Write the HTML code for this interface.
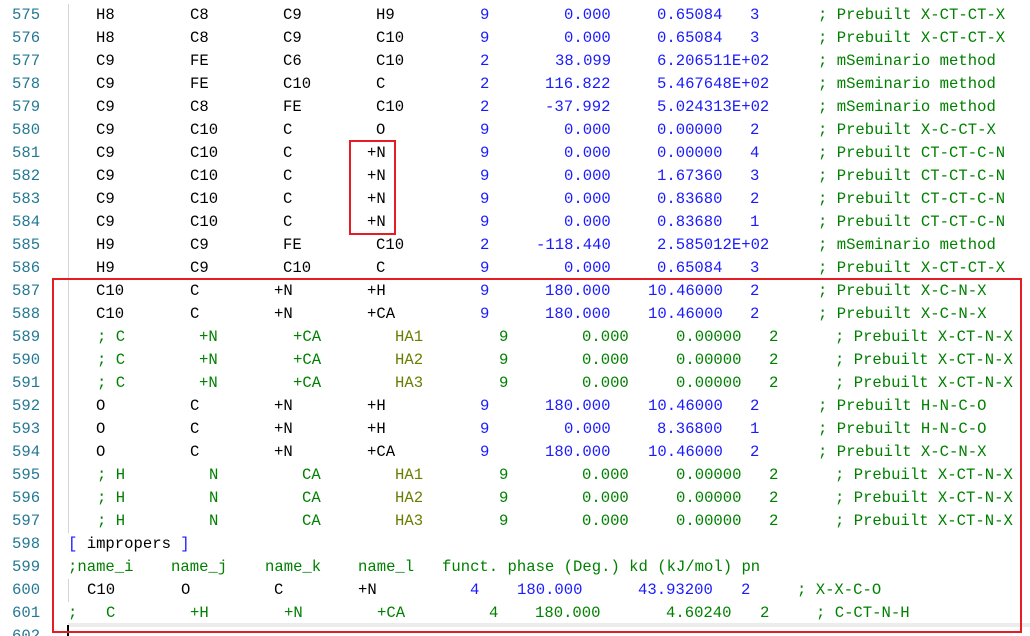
<!DOCTYPE html>
<html><head><meta charset="utf-8"><style>
html,body{margin:0;padding:0;background:#fff;width:1030px;height:636px;overflow:hidden;position:relative}
body{font-family:"Liberation Mono",monospace;font-size:15.6px}
.r{position:absolute;left:0;width:1030px;height:23px;line-height:23px}
.r span{position:absolute;white-space:pre;top:0}
.n{color:#237893;left:12px}
.k{color:#000}
.b{color:#1a1aff}
.g{color:#008000}
.o{color:#6b7d00}
.guide{position:absolute;left:68px;width:1px;background:#d4d4d4}
.box{position:absolute;border:2px solid #e51c23;box-sizing:border-box}
</style></head><body>
<div class="guide" style="top:4px;height:529px"></div>
<div class="guide" style="top:579px;height:23px"></div>
<div style="position:absolute;left:68px;top:623px;width:962px;height:4px;background:#ececec"></div>
<div style="position:absolute;left:67px;top:625px;width:2px;height:11px;background:#000"></div>

<div class="r" style="top:4px"><span class="n">575</span><span class="k" style="left:96px">H8</span><span class="k" style="left:190px">C8</span><span class="k" style="left:283px">C9</span><span class="k" style="left:376px">H9</span><span class="b" style="left:480px">9</span><span class="b" style="left:564px">0.000</span><span class="b" style="left:657px">0.65084</span><span class="b" style="left:750px">3</span><span class="g" style="left:818px">; Prebuilt X-CT-CT-X</span></div>
<div class="r" style="top:27px"><span class="n">576</span><span class="k" style="left:96px">H8</span><span class="k" style="left:190px">C8</span><span class="k" style="left:283px">C9</span><span class="k" style="left:376px">C10</span><span class="b" style="left:480px">9</span><span class="b" style="left:564px">0.000</span><span class="b" style="left:657px">0.65084</span><span class="b" style="left:750px">3</span><span class="g" style="left:818px">; Prebuilt X-CT-CT-X</span></div>
<div class="r" style="top:50px"><span class="n">577</span><span class="k" style="left:96px">C9</span><span class="k" style="left:190px">FE</span><span class="k" style="left:283px">C6</span><span class="k" style="left:376px">C10</span><span class="b" style="left:480px">2</span><span class="b" style="left:555px">38.099</span><span class="b" style="left:657px">6.206511E+02</span><span class="g" style="left:818px">; mSeminario method</span></div>
<div class="r" style="top:73px"><span class="n">578</span><span class="k" style="left:96px">C9</span><span class="k" style="left:190px">FE</span><span class="k" style="left:283px">C10</span><span class="k" style="left:376px">C</span><span class="b" style="left:480px">2</span><span class="b" style="left:545px">116.822</span><span class="b" style="left:657px">5.467648E+02</span><span class="g" style="left:818px">; mSeminario method</span></div>
<div class="r" style="top:96px"><span class="n">579</span><span class="k" style="left:96px">C9</span><span class="k" style="left:190px">C8</span><span class="k" style="left:283px">FE</span><span class="k" style="left:376px">C10</span><span class="b" style="left:480px">2</span><span class="b" style="left:545px">-37.992</span><span class="b" style="left:657px">5.024313E+02</span><span class="g" style="left:818px">; mSeminario method</span></div>
<div class="r" style="top:119px"><span class="n">580</span><span class="k" style="left:96px">C9</span><span class="k" style="left:190px">C10</span><span class="k" style="left:283px">C</span><span class="k" style="left:376px">O</span><span class="b" style="left:480px">9</span><span class="b" style="left:564px">0.000</span><span class="b" style="left:657px">0.00000</span><span class="b" style="left:750px">2</span><span class="g" style="left:818px">; Prebuilt X-C-CT-X</span></div>
<div class="r" style="top:142px"><span class="n">581</span><span class="k" style="left:96px">C9</span><span class="k" style="left:190px">C10</span><span class="k" style="left:283px">C</span><span class="k" style="left:367px">+N</span><span class="b" style="left:480px">9</span><span class="b" style="left:564px">0.000</span><span class="b" style="left:657px">0.00000</span><span class="b" style="left:750px">4</span><span class="g" style="left:818px">; Prebuilt CT-CT-C-N</span></div>
<div class="r" style="top:165px"><span class="n">582</span><span class="k" style="left:96px">C9</span><span class="k" style="left:190px">C10</span><span class="k" style="left:283px">C</span><span class="k" style="left:367px">+N</span><span class="b" style="left:480px">9</span><span class="b" style="left:564px">0.000</span><span class="b" style="left:657px">1.67360</span><span class="b" style="left:750px">3</span><span class="g" style="left:818px">; Prebuilt CT-CT-C-N</span></div>
<div class="r" style="top:188px"><span class="n">583</span><span class="k" style="left:96px">C9</span><span class="k" style="left:190px">C10</span><span class="k" style="left:283px">C</span><span class="k" style="left:367px">+N</span><span class="b" style="left:480px">9</span><span class="b" style="left:564px">0.000</span><span class="b" style="left:657px">0.83680</span><span class="b" style="left:750px">2</span><span class="g" style="left:818px">; Prebuilt CT-CT-C-N</span></div>
<div class="r" style="top:211px"><span class="n">584</span><span class="k" style="left:96px">C9</span><span class="k" style="left:190px">C10</span><span class="k" style="left:283px">C</span><span class="k" style="left:367px">+N</span><span class="b" style="left:480px">9</span><span class="b" style="left:564px">0.000</span><span class="b" style="left:657px">0.83680</span><span class="b" style="left:750px">1</span><span class="g" style="left:818px">; Prebuilt CT-CT-C-N</span></div>
<div class="r" style="top:234px"><span class="n">585</span><span class="k" style="left:96px">H9</span><span class="k" style="left:190px">C9</span><span class="k" style="left:283px">FE</span><span class="k" style="left:376px">C10</span><span class="b" style="left:480px">2</span><span class="b" style="left:536px">-118.440</span><span class="b" style="left:657px">2.585012E+02</span><span class="g" style="left:818px">; mSeminario method</span></div>
<div class="r" style="top:257px"><span class="n">586</span><span class="k" style="left:96px">H9</span><span class="k" style="left:190px">C9</span><span class="k" style="left:283px">C10</span><span class="k" style="left:376px">C</span><span class="b" style="left:480px">9</span><span class="b" style="left:564px">0.000</span><span class="b" style="left:657px">0.65084</span><span class="b" style="left:750px">3</span><span class="g" style="left:818px">; Prebuilt X-CT-CT-X</span></div>
<div class="r" style="top:280px"><span class="n">587</span><span class="k" style="left:96px">C10</span><span class="k" style="left:190px">C</span><span class="k" style="left:274px">+N</span><span class="k" style="left:367px">+H</span><span class="b" style="left:480px">9</span><span class="b" style="left:545px">180.000</span><span class="b" style="left:648px">10.46000</span><span class="b" style="left:750px">2</span><span class="g" style="left:818px">; Prebuilt X-C-N-X</span></div>
<div class="r" style="top:303px"><span class="n">588</span><span class="k" style="left:96px">C10</span><span class="k" style="left:190px">C</span><span class="k" style="left:274px">+N</span><span class="k" style="left:367px">+CA</span><span class="b" style="left:480px">9</span><span class="b" style="left:545px">180.000</span><span class="b" style="left:648px">10.46000</span><span class="b" style="left:750px">2</span><span class="g" style="left:818px">; Prebuilt X-C-N-X</span></div>
<div class="r" style="top:326px"><span class="n">589</span><span class="g" style="left:97px">; C</span><span class="g" style="left:199px">+N</span><span class="g" style="left:293px">+CA</span><span class="o" style="left:395px">HA1</span><span class="g" style="left:499px">9</span><span class="g" style="left:582px">0.000</span><span class="g" style="left:676px">0.00000</span><span class="g" style="left:769px">2</span><span class="g" style="left:835px">; Prebuilt X-CT-N-X</span></div>
<div class="r" style="top:349px"><span class="n">590</span><span class="g" style="left:97px">; C</span><span class="g" style="left:199px">+N</span><span class="g" style="left:293px">+CA</span><span class="o" style="left:395px">HA2</span><span class="g" style="left:499px">9</span><span class="g" style="left:582px">0.000</span><span class="g" style="left:676px">0.00000</span><span class="g" style="left:769px">2</span><span class="g" style="left:835px">; Prebuilt X-CT-N-X</span></div>
<div class="r" style="top:372px"><span class="n">591</span><span class="g" style="left:97px">; C</span><span class="g" style="left:199px">+N</span><span class="g" style="left:293px">+CA</span><span class="o" style="left:395px">HA3</span><span class="g" style="left:499px">9</span><span class="g" style="left:582px">0.000</span><span class="g" style="left:676px">0.00000</span><span class="g" style="left:769px">2</span><span class="g" style="left:835px">; Prebuilt X-CT-N-X</span></div>
<div class="r" style="top:395px"><span class="n">592</span><span class="k" style="left:96px">O</span><span class="k" style="left:190px">C</span><span class="k" style="left:274px">+N</span><span class="k" style="left:367px">+H</span><span class="b" style="left:480px">9</span><span class="b" style="left:545px">180.000</span><span class="b" style="left:648px">10.46000</span><span class="b" style="left:750px">2</span><span class="g" style="left:818px">; Prebuilt H-N-C-O</span></div>
<div class="r" style="top:418px"><span class="n">593</span><span class="k" style="left:96px">O</span><span class="k" style="left:190px">C</span><span class="k" style="left:274px">+N</span><span class="k" style="left:367px">+H</span><span class="b" style="left:480px">9</span><span class="b" style="left:564px">0.000</span><span class="b" style="left:657px">8.36800</span><span class="b" style="left:750px">1</span><span class="g" style="left:818px">; Prebuilt H-N-C-O</span></div>
<div class="r" style="top:441px"><span class="n">594</span><span class="k" style="left:96px">O</span><span class="k" style="left:190px">C</span><span class="k" style="left:274px">+N</span><span class="k" style="left:367px">+CA</span><span class="b" style="left:480px">9</span><span class="b" style="left:545px">180.000</span><span class="b" style="left:648px">10.46000</span><span class="b" style="left:750px">2</span><span class="g" style="left:818px">; Prebuilt X-C-N-X</span></div>
<div class="r" style="top:464px"><span class="n">595</span><span class="g" style="left:97px">; H</span><span class="g" style="left:209px">N</span><span class="g" style="left:302px">CA</span><span class="o" style="left:395px">HA1</span><span class="g" style="left:499px">9</span><span class="g" style="left:582px">0.000</span><span class="g" style="left:676px">0.00000</span><span class="g" style="left:769px">2</span><span class="g" style="left:835px">; Prebuilt X-CT-N-X</span></div>
<div class="r" style="top:487px"><span class="n">596</span><span class="g" style="left:97px">; H</span><span class="g" style="left:209px">N</span><span class="g" style="left:302px">CA</span><span class="o" style="left:395px">HA2</span><span class="g" style="left:499px">9</span><span class="g" style="left:582px">0.000</span><span class="g" style="left:676px">0.00000</span><span class="g" style="left:769px">2</span><span class="g" style="left:835px">; Prebuilt X-CT-N-X</span></div>
<div class="r" style="top:510px"><span class="n">597</span><span class="g" style="left:97px">; H</span><span class="g" style="left:209px">N</span><span class="g" style="left:302px">CA</span><span class="o" style="left:395px">HA3</span><span class="g" style="left:499px">9</span><span class="g" style="left:582px">0.000</span><span class="g" style="left:676px">0.00000</span><span class="g" style="left:769px">2</span><span class="g" style="left:835px">; Prebuilt X-CT-N-X</span></div>
<div class="r" style="top:533px"><span class="n">598</span><span style="left:68px"><span class="b" style="position:static">[</span><span class="k" style="position:static"> impropers </span><span class="b" style="position:static">]</span></span></div>
<div class="r" style="top:556px"><span class="n">599</span><span class="g" style="left:68px">;name_i</span><span class="g" style="left:171px">name_j</span><span class="g" style="left:265px">name_k</span><span class="g" style="left:358px">name_l</span><span class="g" style="left:442px">funct. phase (Deg.) kd (kJ/mol) pn</span></div>
<div class="r" style="top:579px"><span class="n">600</span><span class="k" style="left:87px">C10</span><span class="k" style="left:181px">O</span><span class="k" style="left:274px">C</span><span class="k" style="left:358px">+N</span><span class="b" style="left:470px">4</span><span class="b" style="left:517px">180.000</span><span class="b" style="left:638px">43.93200</span><span class="b" style="left:741px">2</span><span class="g" style="left:797px">; X-X-C-O</span></div>
<div class="r" style="top:602px"><span class="n">601</span><span class="g" style="left:68px">;</span><span class="g" style="left:106px">C</span><span class="g" style="left:190px">+H</span><span class="g" style="left:284px">+N</span><span class="g" style="left:377px">+CA</span><span class="g" style="left:489px">4</span><span class="g" style="left:535px">180.000</span><span class="g" style="left:666px">4.60240</span><span class="g" style="left:760px">2</span><span class="g" style="left:816px">; C-CT-N-H</span></div>
<div class="r" style="top:625px"><span class="n">602</span></div>

<div class="box" style="left:349px;top:140px;width:47px;height:95px"></div>
<div class="box" style="left:52px;top:278px;width:970px;height:355px"></div>
</body></html>
